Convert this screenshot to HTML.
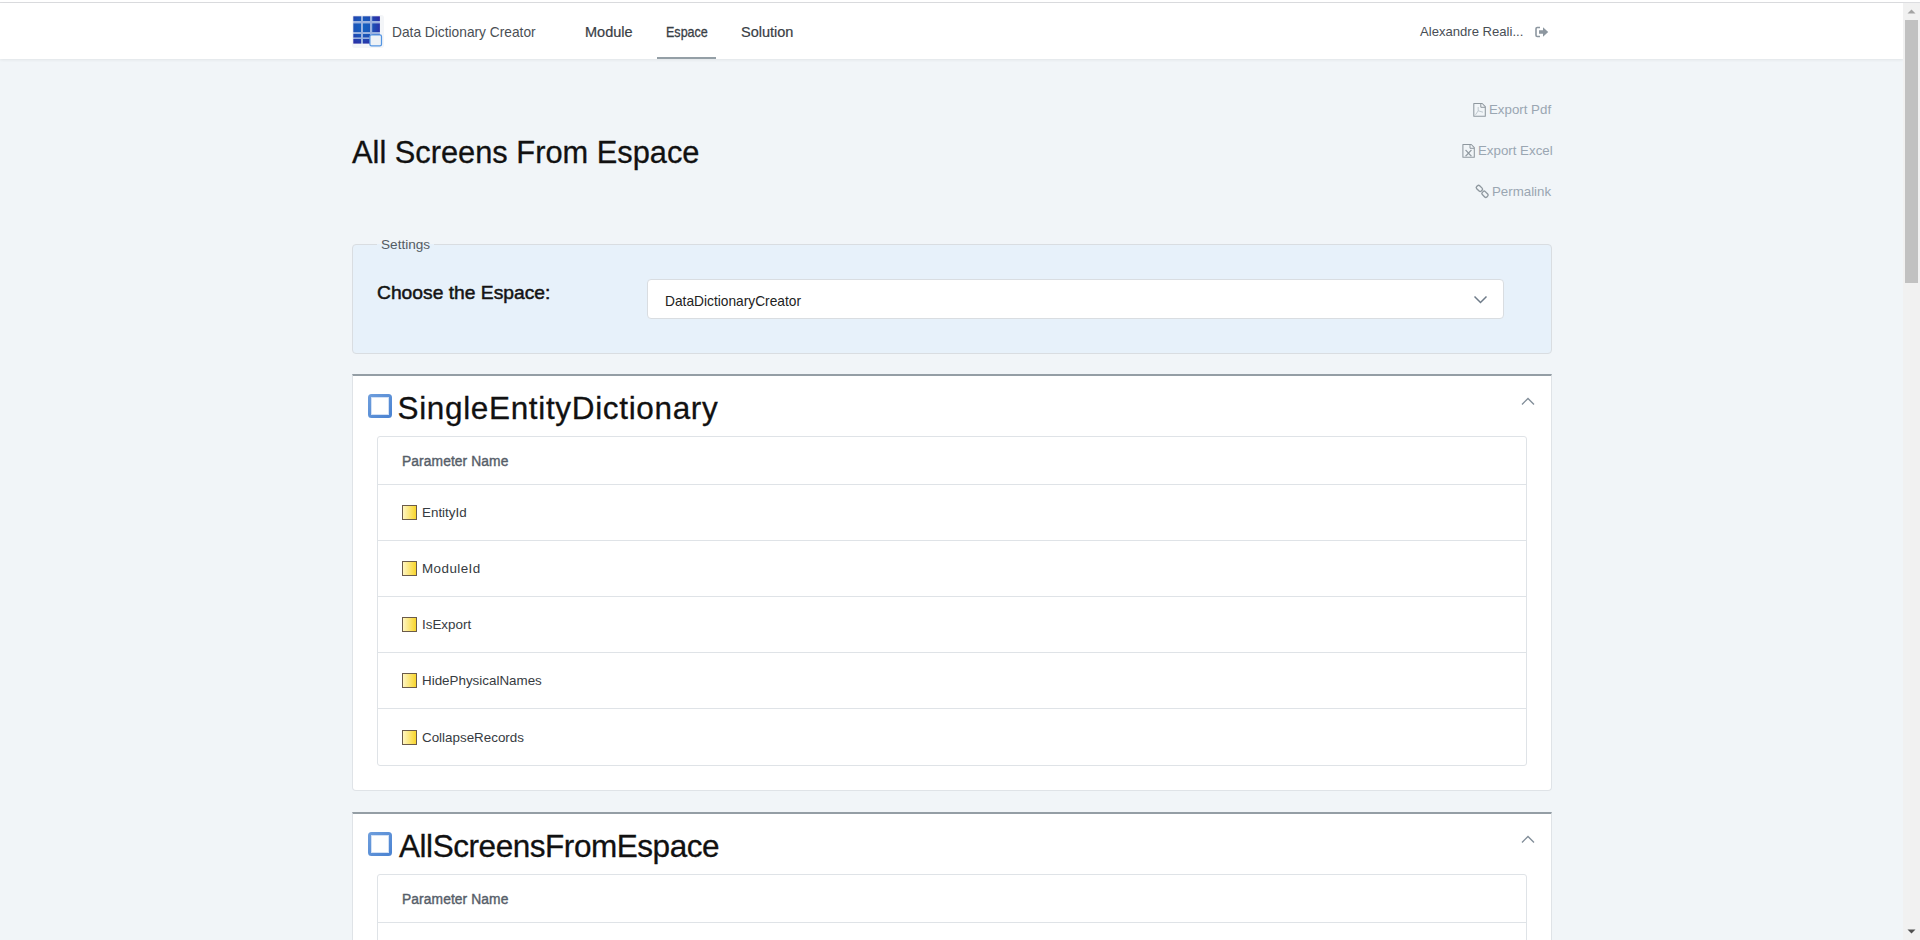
<!DOCTYPE html>
<html>
<head>
<meta charset="utf-8">
<style>
*{box-sizing:border-box;margin:0;padding:0}
html,body{width:1920px;height:940px;overflow:hidden}
body{position:relative;background:#f1f5f8;font-family:"Liberation Sans",sans-serif;color:#212529}
.abs{position:absolute;white-space:nowrap}
#topline{position:absolute;left:0;top:2px;width:1920px;height:1px;background:#dcdde0}
#header{position:absolute;left:0;top:3px;width:1903px;height:56px;background:#fff;box-shadow:0 1px 3px rgba(0,0,0,.07)}
#scroll{position:absolute;left:1903px;top:3px;width:17px;height:937px;background:#f1f1f1}
#thumb{position:absolute;left:2px;top:17px;width:13px;height:263px;background:#c1c1c1}
.navtxt{font-size:13.75px;color:#4a4f55}
.nav{font-size:14.5px;font-weight:400;color:#3a4046;-webkit-text-stroke:0.22px #3a4046}
.uline{position:absolute;left:657px;top:54px;width:59px;height:2px;background:#949fa6}
h1{position:absolute;left:352px;top:133px;font-size:30.8px;-webkit-text-stroke:0.3px #111;font-weight:400;color:#111;white-space:nowrap;line-height:40px}
.exp{font-size:13.3px;color:#9aa6b2}
#settings{position:absolute;left:352px;top:244px;width:1200px;height:110px;background:#e7f1fa;border:1px solid #d9dde1;border-radius:4px}
#legend{position:absolute;left:377px;top:236px;padding:0 4px;background:linear-gradient(#f1f5f8 0,#f1f5f8 8px,#e7f1fa 8px);font-size:13.6px;color:#555c63;line-height:18px}
#choose{position:absolute;left:377px;top:282px;font-size:19.25px;font-weight:400;color:#141414;line-height:22px;-webkit-text-stroke:0.5px #141414}
#select{position:absolute;left:647px;top:279px;width:857px;height:40px;background:#fff;border:1px solid #d9dde1;border-radius:4px}
#selval{position:absolute;left:17px;top:14px;font-size:13.75px;color:#222;line-height:16px}
.card{position:absolute;left:352px;width:1200px;background:#fff;border:1px solid #dfe3e7;border-top:2px solid #949ea5;border-radius:0 0 4px 4px}
.chk{position:absolute;left:15px;top:18px;width:24px;height:24px}
.ctitle{position:absolute;left:46px;top:13px;font-size:31.5px;color:#111;-webkit-text-stroke:0.3px #111;line-height:36px;white-space:nowrap}
.caret{position:absolute;left:1168px;top:20px;width:14px;height:9px}
.tbl{position:absolute;left:24px;top:60px;width:1150px;border:1px solid #dfe3e7;border-radius:3px;background:#fff}
.th{height:48px;border-bottom:1px solid #dfe3e7;position:relative}
.th span{position:absolute;left:24px;top:17px;font-size:13.8px;font-weight:400;color:#565e69;line-height:16px;-webkit-text-stroke:0.4px #565e69;letter-spacing:0.1px}
.tr{height:56px;border-bottom:1px solid #dfe3e7;position:relative}
.tr:last-child{border-bottom:none}.tr:last-child .ic,.tr:last-child span{margin-top:1px}
.ic{position:absolute;left:24px;top:20px;width:15px;height:15px;border:1px solid #6b5b4a;background:linear-gradient(90deg,#fff6c2,#f8d52c)}
.tr span{position:absolute;left:44px;top:20px;font-size:13.4px;color:#363b41;line-height:16px}
</style>
</head>
<body>
<div class="abs" style="left:0;top:0;width:1920px;height:2px;background:#fff"></div>
<div id="topline"></div>
<div id="header">
  <svg class="abs" style="left:352px;top:12px" width="32" height="33" viewBox="0 0 32 33">
    <defs><radialGradient id="lg" gradientUnits="userSpaceOnUse" cx="11" cy="12" r="20"><stop offset="0" stop-color="#1462c2"/><stop offset="0.45" stop-color="#1b55b8"/><stop offset="1" stop-color="#2d26a2"/></radialGradient></defs>
    <rect x="0" y="0" width="32" height="33" rx="3" fill="#f3f5f8"/>
    <g fill="url(#lg)">
      <rect x="1.3" y="1.3" width="7.8" height="4.8"/><rect x="11" y="1.3" width="7.3" height="4.8"/><rect x="20.1" y="1.3" width="7.8" height="4.8"/>
      <rect x="1.3" y="8.2" width="7.8" height="8.8"/><rect x="11" y="8.2" width="7.3" height="8.8"/><rect x="20.1" y="8.2" width="7.8" height="8.8"/>
      <rect x="1.3" y="18.9" width="7.8" height="3.8"/><rect x="11" y="18.9" width="7.3" height="3.8"/><rect x="20.1" y="18.9" width="7.8" height="3.8"/>
      <rect x="1.3" y="24" width="7.8" height="4.6"/><rect x="11" y="24" width="7.3" height="4.6"/><rect x="20.1" y="24" width="7.8" height="4.6"/>
    </g>
    <g fill="#8fa9dc" opacity="0.9">
      <rect x="1.3" y="6.1" width="26.6" height="2.1"/><rect x="1.3" y="17" width="26.6" height="1.9"/><rect x="1.3" y="22.7" width="26.6" height="1.3"/>
      <rect x="9.1" y="1.3" width="1.9" height="27.3"/><rect x="18.3" y="1.3" width="1.8" height="27.3"/>
    </g>
    <rect x="17.9" y="19.8" width="11.6" height="11" rx="1.6" fill="#eef2f6" stroke="#5495e2" stroke-width="1.25"/>
  </svg>
  <div class="abs navtxt" style="left:392px;top:21px;line-height:18px">Data Dictionary Creator</div>
  <div class="abs nav" style="left:585px;top:20px;line-height:18px">Module</div>
  <div class="abs nav" style="left:666px;top:20px;line-height:18px;transform:scaleX(0.865);transform-origin:0 0;-webkit-text-stroke:0.3px #3a4046">Espace</div>
  <div class="abs nav" style="left:741px;top:20px;line-height:18px">Solution</div>
  <div class="abs navtxt" style="left:1420px;top:20px;line-height:18px;color:#484e55;font-size:13.1px">Alexandre Reali...</div>
  <svg class="abs" style="left:1535px;top:23px" width="14" height="12" viewBox="0 0 14 12">
    <path d="M5 1.5H2.2Q1 1.5 1 2.7V9.3Q1 10.5 2.2 10.5H5" fill="none" stroke="#8d97a0" stroke-width="1.6"/>
    <path d="M4 4.3H8V1.3L13.2 6L8 10.7V7.7H4Z" fill="#8d97a0"/>
  </svg>
  <div class="uline"></div>
</div>
<div id="scroll"><div id="thumb"></div>
  <svg class="abs" style="left:0;top:0" width="17" height="17"><path d="M4.5 10.5L8.5 6.5L12.5 10.5Z" fill="#a3a3a3"/></svg>
  <svg class="abs" style="left:0;top:920px" width="17" height="17"><path d="M4.5 6.5L12.5 6.5L8.5 10.5Z" fill="#505050"/></svg>
</div>

<h1>All Screens From Espace</h1>

<svg class="abs" style="left:1460px;top:98px" width="32" height="24" viewBox="1460 98 32 24">
  <path d="M1473.8 103.5H1482.2L1485.3 106.6V116.3H1473.8Z" fill="none" stroke="#8f989f" stroke-width="1.05" stroke-linejoin="round"/>
  <path d="M1480.8 103.6V107.3H1485.2" fill="none" stroke="#8f989f" stroke-width="1"/>
  <path d="M1478.2 107V110.8L1475.5 114.8M1478.2 110.8L1483 112.2" fill="none" stroke="#b3bcc4" stroke-width="0.8"/>
</svg>
<div class="abs exp" style="left:1489px;top:101px;line-height:17px">Export Pdf</div>
<svg class="abs" style="left:1458px;top:139px" width="24" height="24" viewBox="1458 139 24 24">
  <path d="M1462.9 144.5H1471.3L1474.3 147.6V157.3H1462.9Z" fill="none" stroke="#8f989f" stroke-width="1.05" stroke-linejoin="round"/>
  <path d="M1470 144.6V148.3H1474.2" fill="none" stroke="#8f989f" stroke-width="1"/>
  <path d="M1466.2 150.6L1470.8 155.6M1470.8 150.6L1466.2 155.6" fill="none" stroke="#8f989f" stroke-width="1.3"/>
  <path d="M1465 150.4H1467M1470 150.4H1472M1465 155.8H1467M1470 155.8H1472" fill="none" stroke="#8f989f" stroke-width="0.7"/>
</svg>
<div class="abs exp" style="left:1478px;top:142px;line-height:17px">Export Excel</div>
<svg class="abs" style="left:1470px;top:180px" width="24" height="22" viewBox="1470 180 24 22">
  <rect x="1476.2" y="186.3" width="6.4" height="4.2" rx="1.5" transform="rotate(45 1479.4 188.4)" fill="none" stroke="#8f989f" stroke-width="1.35"/>
  <rect x="1481.8" y="192.2" width="6.4" height="4.2" rx="1.5" transform="rotate(45 1485 194.3)" fill="none" stroke="#8f989f" stroke-width="1.35"/>
</svg>
<div class="abs exp" style="left:1492px;top:183px;line-height:17px">Permalink</div>

<div id="settings"></div>
<div id="legend">Settings</div>
<div id="choose">Choose the Espace:</div>
<div id="select"><div id="selval" class="abs">DataDictionaryCreator</div>
  <svg class="abs" style="left:825px;top:15px" width="16" height="10" viewBox="0 0 16 10"><path d="M1.5 1.5L7.5 7.5L13.5 1.5" fill="none" stroke="#6e7b89" stroke-width="1.45"/></svg>
</div>
<div class="card" style="top:374px;height:417px">
  <svg class="chk" viewBox="0 0 24 24"><defs><linearGradient id="cg" x1="0" y1="0" x2="1" y2="1"><stop offset="0" stop-color="#6d9ddc"/><stop offset="1" stop-color="#4c84d2"/></linearGradient></defs><rect x="1.5" y="1.5" width="21" height="21" rx="2" fill="#fff" stroke="url(#cg)" stroke-width="3"/><rect x="3.5" y="3.5" width="17" height="17" fill="none" stroke="#b5cdee" stroke-width="1" opacity=".6"/></svg>
  <div class="ctitle" style="left:44.5px;top:14px;letter-spacing:0.66px">SingleEntityDictionary</div>
  <svg class="caret" viewBox="0 0 14 9"><path d="M1 8.4L7 2.4L13 8.4" fill="none" stroke="#818d98" stroke-width="1.35"/></svg>
  <div class="tbl">
    <div class="th"><span>Parameter Name</span></div>
    <div class="tr"><div class="ic"></div><span>EntityId</span></div>
    <div class="tr"><div class="ic"></div><span style="letter-spacing:0.45px">ModuleId</span></div>
    <div class="tr"><div class="ic"></div><span>IsExport</span></div>
    <div class="tr"><div class="ic"></div><span>HidePhysicalNames</span></div>
    <div class="tr"><div class="ic"></div><span>CollapseRecords</span></div>
  </div>
</div>
<div class="card" style="top:812px;height:417px">
  <svg class="chk" viewBox="0 0 24 24"><defs><linearGradient id="cg" x1="0" y1="0" x2="1" y2="1"><stop offset="0" stop-color="#6d9ddc"/><stop offset="1" stop-color="#4c84d2"/></linearGradient></defs><rect x="1.5" y="1.5" width="21" height="21" rx="2" fill="#fff" stroke="url(#cg)" stroke-width="3"/><rect x="3.5" y="3.5" width="17" height="17" fill="none" stroke="#b5cdee" stroke-width="1" opacity=".6"/></svg>
  <div class="ctitle" style="top:14px;letter-spacing:-0.45px">AllScreensFromEspace</div>
  <svg class="caret" viewBox="0 0 14 9"><path d="M1 8.4L7 2.4L13 8.4" fill="none" stroke="#818d98" stroke-width="1.35"/></svg>
  <div class="tbl">
    <div class="th"><span>Parameter Name</span></div>
    <div class="tr"><div class="ic"></div><span>ScreenA</span></div>
    <div class="tr"><div class="ic"></div><span>ScreenB</span></div>
  </div>
</div>
</body>
</html>
